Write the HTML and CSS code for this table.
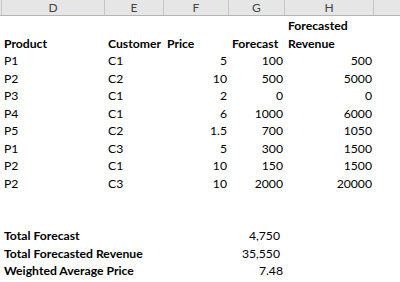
FILE: index.html
```
<!DOCTYPE html>
<html>
<head>
<meta charset="utf-8">
<link rel="stylesheet" href="styles.css">
</head>
<body>
<div class="sheet">
  <div class="colhead">
    <div class="ch stub"></div>
    <div class="ch cd">D</div>
    <div class="ch ce">E</div>
    <div class="ch cf">F</div>
    <div class="ch cg">G</div>
    <div class="ch chh">H</div>
    <div class="ch ci"></div>
  </div>
  <div class="grid">
    <div></div><div></div><div></div><div></div><div class="b">Forecasted</div><div></div>
    <div class="b">Product</div><div class="b">Customer</div><div class="b">Price</div><div class="b">Forecast</div><div class="b">Revenue</div><div></div>

    <div>P1</div><div>C1</div><div class="r">5</div><div class="r">100</div><div class="r">500</div><div></div>
    <div>P2</div><div>C2</div><div class="r">10</div><div class="r">500</div><div class="r">5000</div><div></div>
    <div>P3</div><div>C1</div><div class="r">2</div><div class="r">0</div><div class="r">0</div><div></div>
    <div>P4</div><div>C1</div><div class="r">6</div><div class="r">1000</div><div class="r">6000</div><div></div>
    <div>P5</div><div>C2</div><div class="r">1.5</div><div class="r">700</div><div class="r">1050</div><div></div>
    <div>P1</div><div>C3</div><div class="r">5</div><div class="r">300</div><div class="r">1500</div><div></div>
    <div>P2</div><div>C1</div><div class="r">10</div><div class="r">150</div><div class="r">1500</div><div></div>
    <div>P2</div><div>C3</div><div class="r">10</div><div class="r">2000</div><div class="r">20000</div><div></div>

    <div></div><div></div><div></div><div></div><div></div><div></div>
    <div></div><div></div><div></div><div></div><div></div><div></div>

    <div class="b">Total Forecast</div><div></div><div></div><div class="r acc">4,750</div><div></div><div></div>
    <div class="b">Total Forecasted Revenue</div><div></div><div></div><div class="r acc">35,550</div><div></div><div></div>
    <div class="b">Weighted Average Price</div><div></div><div></div><div class="r">7.48</div><div></div><div></div>
  </div>
</div>
</body>
</html>
```

FILE: styles.css
```
html, body {
  margin: 0;
  padding: 0;
  background: #ffffff;
}
.sheet {
  width: 400px;
  height: 282px;
  overflow: hidden;
  font-family: "Lato", "Liberation Sans", sans-serif;
  font-size: 12.2px;
  color: #000;
}
.colhead {
  display: flex;
  height: 16px;
  background: #e6e6e6;
  border-bottom: 1px solid #b5b5b5;
  box-sizing: border-box;
}
.ch {
  box-sizing: border-box;
  border-right: 1px solid #c6c6c6;
  text-align: center;
  line-height: 15px;
  font-size: 12px;
  color: #444;
}
.stub { width: 2px; }
.cd { width: 103px; }
.ce { width: 59px; }
.cf { width: 65px; }
.cg { width: 56px; }
.chh { width: 89px; }
.ci { flex: 1; border-right: none; }
.grid {
  display: grid;
  grid-template-columns: 105px 59px 65px 56px 89px 26px;
  grid-auto-rows: 17.5px;
  padding-top: 1px;
}
.grid > div {
  padding: 0 2px 0 3px;
  white-space: nowrap;
  line-height: 17.5px;
}
.grid > div:nth-child(6n+1) {
  padding-left: 4px;
}
.b { font-weight: bold; }
.r { text-align: right; }
.acc { padding-right: 5px !important; }
```
